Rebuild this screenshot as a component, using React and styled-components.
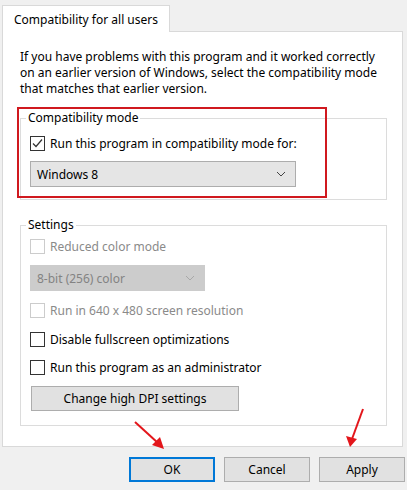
import React from 'react';
import styled, { createGlobalStyle } from 'styled-components';

const GlobalStyle = createGlobalStyle`
  html, body {
    margin: 0;
    padding: 0;
    background: #f0f0f0;
  }
  body {
    font-family: "Noto Sans", "Open Sans", sans-serif;
    font-size: 12px;
    color: #000;
  }
`;

const Window = styled.div`
  position: relative;
  width: 407px;
  height: 490px;
  overflow: hidden;
  background: #f0f0f0;
`;

const TabStrip = styled.div`
  display: flex;
  padding: 5px 0 0 2px;
`;

const Tab = styled.div`
  box-sizing: border-box;
  width: 168px;
  height: 27px;
  margin-bottom: -1px;
  padding: 6px 0 0 11px;
  background: #fff;
  border: 1px solid #d9d9d9;
  border-bottom: none;
  position: relative;
  z-index: 1;
  line-height: 16px;
`;

const Panel = styled.div`
  box-sizing: border-box;
  width: 401px;
  height: 416px;
  margin-left: 2px;
  padding: 17px 15px 0 17px;
  background: #fff;
  border: 1px solid #d9d9d9;
`;

const Intro = styled.p`
  margin: 0 0 21px;
  line-height: 16px;
`;

const Line = styled.span`
  display: block;
  height: 16px;
`;

const GroupBox = styled.div`
  box-sizing: border-box;
  border: 1px solid #dcdcdc;
  padding: 0 0 ${(p) => p.$bottom}px 9px;
  margin-bottom: ${(p) => p.$after || 0}px;
  display: flex;
  flex-direction: column;
  align-items: flex-start;
`;

const Legend = styled.div`
  margin: -9px 0 0 -4px;
  padding: 0 2px;
  background: #fff;
  line-height: 16px;
`;

const CheckRow = styled.label`
  display: flex;
  align-items: center;
  gap: 5px;
  height: 16px;
  margin-top: ${(p) => p.$top}px;
  color: ${(p) => (p.$disabled ? '#8a8a8a' : '#000')};
`;

const Box = styled.span`
  box-sizing: border-box;
  width: 15px;
  height: 15px;
  border: 1px solid ${(p) => (p.$disabled ? '#cccccc' : '#333333')};
  background: #fff;
  display: flex;
  align-items: center;
  justify-content: center;
`;

const Combo = styled.div`
  box-sizing: border-box;
  display: flex;
  align-items: center;
  justify-content: space-between;
  width: ${(p) => p.$width}px;
  height: ${(p) => p.$height}px;
  margin-top: ${(p) => p.$top}px;
  padding: 0 9px 0 6px;
  background: ${(p) => (p.$disabled ? '#cccccc' : '#e5e5e5')};
  border: 1px solid ${(p) => (p.$disabled ? '#cccccc' : '#adadad')};
  color: ${(p) => (p.$disabled ? '#838383' : '#000')};
`;

const Button = styled.button`
  box-sizing: border-box;
  width: ${(p) => p.$width || 86}px;
  height: ${(p) => p.$height || 25}px;
  margin-top: ${(p) => p.$top || 0}px;
  margin-left: ${(p) => p.$left || 0}px;
  padding: 0;
  font-family: inherit;
  font-size: 12px;
  color: #000;
  background: #e1e1e1;
  border: ${(p) => (p.$default ? '2px solid #0078d7' : '1px solid #adadad')};
`;

const ButtonBar = styled.div`
  display: flex;
  justify-content: flex-end;
  gap: 9px;
  padding: 10px 2px 0 0;
`;

const Highlight = styled.div`
  position: absolute;
  left: 17px;
  top: 107px;
  width: 310px;
  height: 91px;
  box-sizing: border-box;
  border: 2px solid #d0191f;
  pointer-events: none;
`;

const Arrows = styled.svg`
  position: absolute;
  left: 0;
  top: 0;
  pointer-events: none;
`;

const Check = () => (
  <svg width="13" height="13" viewBox="0 0 13 13">
    <path d="M2 6.5 L5 9.5 L11 2.5" fill="none" stroke="#333" strokeWidth="1.2" />
  </svg>
);

const Chevron = ({ color }) => (
  <svg width="10" height="6" viewBox="0 0 10 6">
    <path d="M1 1 L5 5 L9 1" fill="none" stroke={color} strokeWidth="1" />
  </svg>
);

const Option = ({ label, checked, disabled, top }) => (
  <CheckRow $top={top} $disabled={disabled}>
    <Box $disabled={disabled}>{checked && <Check />}</Box>
    {label}
  </CheckRow>
);

const App = () => (
  <Window>
    <GlobalStyle />
    <TabStrip>
      <Tab>Compatibility for all users</Tab>
    </TabStrip>
    <Panel>
      <Intro>
        <Line>If you have problems with this program and it worked correctly</Line>
        <Line>on an earlier version of Windows, select the compatibility mode</Line>
        <Line>that matches that earlier version.</Line>
      </Intro>
      <GroupBox $bottom={12} $after={25}>
        <Legend>Compatibility mode</Legend>
        <Option label="Run this program in compatibility mode for:" checked top={9} />
        <Combo $width={266} $height={26} $top={10}>
          Windows 8
          <Chevron color="#444" />
        </Combo>
      </GroupBox>
      <GroupBox $bottom={14}>
        <Legend>Settings</Legend>
        <Option label="Reduced color mode" disabled top={5} />
        <Combo $width={175} $height={26} $top={11} $disabled>
          8-bit (256) color
          <Chevron color="#a8a8a8" />
        </Combo>
        <Option label="Run in 640 x 480 screen resolution" disabled top={11} />
        <Option label="Disable fullscreen optimizations" top={13} />
        <Option label="Run this program as an administrator" top={12} />
        <Button $width={208} $height={25} $top={11} $left={1}>
          Change high DPI settings
        </Button>
      </GroupBox>
    </Panel>
    <ButtonBar>
      <Button $default>OK</Button>
      <Button>Cancel</Button>
      <Button>Apply</Button>
    </ButtonBar>
    <Highlight />
    <Arrows width="407" height="490" viewBox="0 0 407 490">
      <line x1="135" y1="422" x2="158" y2="443" stroke="#e3161b" strokeWidth="2" />
      <polygon points="164,449 152,445 160,437" fill="#e3161b" />
      <line x1="363" y1="409" x2="352" y2="439" stroke="#e3161b" strokeWidth="2" />
      <polygon points="350,447 346,436 357,439" fill="#e3161b" />
    </Arrows>
  </Window>
);

export default App;
